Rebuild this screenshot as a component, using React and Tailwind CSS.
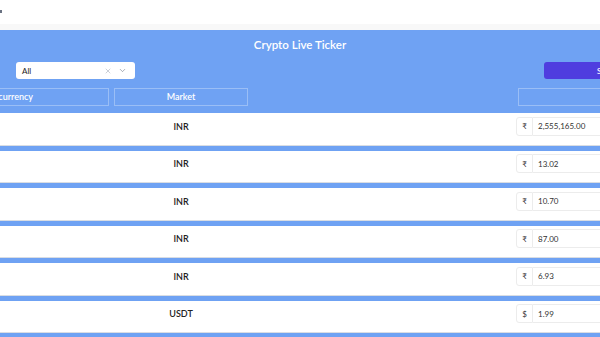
import { X, ChevronDown } from "lucide-react";

const rows = [
  { market: "INR", sign: "₹", price: "2,555,165.00" },
  { market: "INR", sign: "₹", price: "13.02" },
  { market: "INR", sign: "₹", price: "10.70" },
  { market: "INR", sign: "₹", price: "87.00" },
  { market: "INR", sign: "₹", price: "6.93" },
  { market: "USDT", sign: "$", price: "1.99" },
];

export default function App() {
  return (
    <div className="w-[600px] h-[337px] overflow-hidden bg-white font-['Lato',sans-serif]">
      <div className="h-[24px] relative">
        <div className="absolute left-0 top-[10px] w-[2px] h-[3px] bg-gray-500" />
      </div>
      <div className="h-[6px] bg-[#f8f8f8]" />
      <div className="bg-[#6fa2f3] pt-[8px]">
        <h1 className="h-[13px] leading-[13px] text-center text-white text-[11.5px] font-semibold">
          Crypto Live Ticker
        </h1>

        {/* filter + action */}
        <div className="flex items-center mt-[11px] h-[17px]">
          <div className="ml-[16px] w-[119px] h-[17px] bg-white rounded-[3px] flex items-center pl-[6px] pr-[8px]">
            <span className="text-[8px] text-[#222] flex-1">All</span>
            <X size={8} strokeWidth={1.5} className="text-gray-400 mr-[6px]" />
            <ChevronDown size={9} strokeWidth={1.5} className="text-gray-500" />
          </div>
          <button className="ml-auto mr-[-82px] w-[138px] h-[17px] rounded-[3px] bg-[#4f3ddf] text-white text-[8px] font-semibold flex items-center pl-[53px]">
            Search
          </button>
        </div>

        {/* header */}
        <div className="flex mt-[9px] ml-[-101px] h-[18px] text-white text-[9px] font-semibold">
          <div className="w-[210px] shrink-0 border border-white/30 flex items-center justify-center pr-[4px]">
            Cryptocurrency
          </div>
          <div className="w-[134px] shrink-0 ml-[5px] border border-white/30 flex items-center justify-center">
            Market
          </div>
          <div className="w-[130px] shrink-0 ml-[270px] border border-white/30" />
        </div>

        {/* rows */}
        <div className="pt-[7px] flex flex-col gap-[5px]">
          {rows.map((r, i) => (
            <div key={i} className="h-[32.5px] pb-[5px] bg-white border-b border-[#d9dde3] flex items-center ml-[-101px]">
              <div className="w-[210px] shrink-0" />
              <div className="w-[134px] shrink-0 ml-[5px] text-center text-[9px] font-semibold text-[#222]">
                {r.market}
              </div>
              <div className="ml-[268px] shrink-0 flex h-[19px] text-[8px] text-[#333]">
                <div className="w-[17px] border border-[#ececec] rounded-l-[3px] flex items-center justify-center">
                  {r.sign}
                </div>
                <div className="w-[120px] border border-l-0 border-[#ececec] flex items-center pl-[5px]">
                  {r.price}
                </div>
              </div>
            </div>
          ))}
          <div className="h-[10px]" />
        </div>
      </div>
    </div>
  );
}
